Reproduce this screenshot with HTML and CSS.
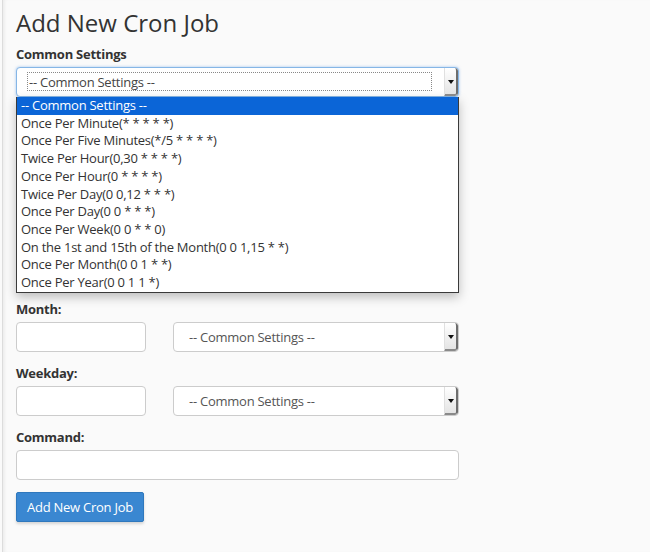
FILE: index.html
```html
<!DOCTYPE html>
<html lang="en">
<head>
    <meta charset="UTF-8">
    <meta name="viewport" content="width=device-width, initial-scale=1.0">
    <title>Add New Cron Job</title>
    <link rel="stylesheet" href="styles.css">
</head>
<body>

<div class="page">
    <h1>Add New Cron Job</h1>

    <div class="form-group common">
        <label>Common Settings</label>
        <div class="select wide focused">
            <span class="select-text">-- Common Settings --</span>
            <span class="select-arrow"></span>
        </div>

        <!-- open list of the select above -->
        <ul class="dropdown">
            <li class="selected">-- Common Settings --</li>
            <li>Once Per Minute(* * * * *)</li>
            <li>Once Per Five Minutes(*/5 * * * *)</li>
            <li>Twice Per Hour(0,30 * * * *)</li>
            <li>Once Per Hour(0 * * * *)</li>
            <li>Twice Per Day(0 0,12 * * *)</li>
            <li>Once Per Day(0 0 * * *)</li>
            <li>Once Per Week(0 0 * * 0)</li>
            <li>On the 1st and 15th of the Month(0 0 1,15 * *)</li>
            <li>Once Per Month(0 0 1 * *)</li>
            <li>Once Per Year(0 0 1 1 *)</li>
        </ul>
    </div>

    <div class="form-group">
        <label>Month:</label>
        <div class="row">
            <input type="text" class="input small">
            <div class="select">
                <span class="select-text">-- Common Settings --</span>
                <span class="select-arrow"></span>
            </div>
        </div>
    </div>

    <div class="form-group">
        <label>Weekday:</label>
        <div class="row">
            <input type="text" class="input small">
            <div class="select">
                <span class="select-text">-- Common Settings --</span>
                <span class="select-arrow"></span>
            </div>
        </div>
    </div>

    <div class="form-group">
        <label>Command:</label>
        <input type="text" class="input wide">
    </div>

    <button class="btn">Add New Cron Job</button>
</div>

</body>
</html>
```

FILE: styles.css
```css
/* CSS */
body {
    font-family: "Open Sans", Arial, sans-serif;
    background-color: #fafafa;
    color: #333;
    letter-spacing: -0.25px;
    margin: 0;
    padding: 0;
}

.page {
    margin-left: 2px;
    border-left: 1px solid #dcdcdc;
    box-shadow: inset 3px 0 3px -1px rgba(0, 0, 0, 0.05);
    min-height: 552px;
    padding: 5px 0 0 13px;
    box-sizing: border-box;
}

h1 {
    font-size: 24px;
    font-weight: 400;
    line-height: 36px;
    letter-spacing: 0;
    margin: 0 0 4px;
    color: #333;
}

.form-group {
    margin-bottom: 12px;
}

.form-group.common {
    margin-bottom: 7px;
}

.form-group label {
    display: block;
    font-size: 13px;
    font-weight: bold;
    line-height: 18px;
    margin-bottom: 4px;
}

.row {
    display: flex;
    gap: 27px;
    width: 443px;
}

.input {
    height: 30px;
    box-sizing: border-box;
    border: 1px solid #ccc;
    border-radius: 4px;
    background-color: #fff;
    font-family: inherit;
    font-size: 13px;
    padding: 0 10px;
    margin: 0;
}

.input.small {
    width: 130px;
}

.input.wide {
    width: 443px;
    display: block;
}

.select {
    flex: 1;
    display: flex;
    align-items: stretch;
    height: 30px;
    box-sizing: border-box;
    border: 1px solid #ccc;
    border-radius: 4px;
    background-color: #fff;
    font-size: 13px;
    color: #555;
    padding-left: 15px;
    overflow: hidden;
}

.select.wide {
    width: 443px;
    flex: none;
}

.select.focused {
    border-color: #86b6e6;
    box-shadow: 0 0 3px rgba(102, 160, 230, 0.6);
    padding-left: 10px;
    color: #444;
}

.select-text {
    flex: 1;
    display: flex;
    align-items: center;
}

.select.focused .select-text {
    margin: 4px 12px 5px 0;
    padding-left: 2px;
    outline: 1px dotted #888;
    outline-offset: -1px;
}

.select-arrow {
    width: 11px;
    position: relative;
    background: linear-gradient(#ffffff, #e4e4e4);
    border-left: 1px solid #e0e0e0;
    border-right: 2px solid #6e6e6e;
    border-bottom: 2px solid #8a8a8a;
    border-radius: 0 3px 3px 0;
}

.select-arrow::after {
    content: "";
    position: absolute;
    left: 3px;
    top: 50%;
    margin-top: -1px;
    border-left: 3px solid transparent;
    border-right: 3px solid transparent;
    border-top: 4px solid #111;
}

.dropdown {
    width: 443px;
    box-sizing: border-box;
    margin: 0;
    padding: 0;
    list-style: none;
    background-color: #fff;
    border: 1px solid #3a3a3a;
    border-top: none;
    box-shadow: 0 4px 10px rgba(0, 0, 0, 0.25);
}

.dropdown li {
    font-size: 13px;
    line-height: 17.7px;
    padding-left: 4px;
    color: #333;
    white-space: nowrap;
}

.dropdown li.selected {
    background-color: #0b65d7;
    color: #fff;
}

.btn {
    font-family: inherit;
    font-size: 13px;
    letter-spacing: -0.25px;
    color: #fff;
    background-color: #3a87d1;
    border: 1px solid #2f78bd;
    border-radius: 2px;
    height: 30px;
    padding: 0 10px;
    margin-top: 0;
    box-shadow: 0 2px 3px rgba(0, 0, 0, 0.15);
    cursor: pointer;
}

.btn:hover {
    background-color: #2e76bc;
}
```
